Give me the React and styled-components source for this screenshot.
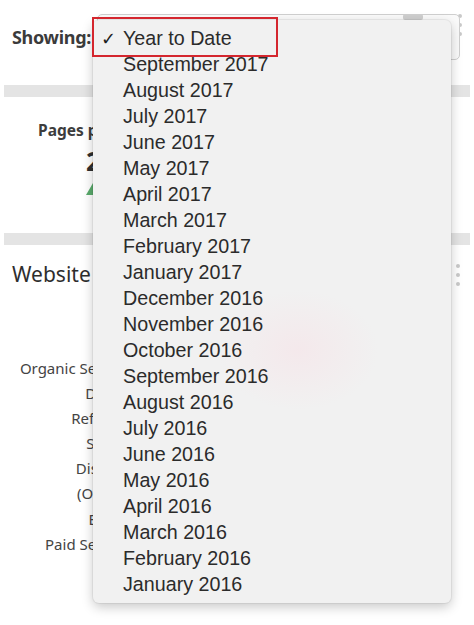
import React from "react";
import styled, { createGlobalStyle } from "styled-components";

const months = [
  "Year to Date",
  "September 2017",
  "August 2017",
  "July 2017",
  "June 2017",
  "May 2017",
  "April 2017",
  "March 2017",
  "February 2017",
  "January 2017",
  "December 2016",
  "November 2016",
  "October 2016",
  "September 2016",
  "August 2016",
  "July 2016",
  "June 2016",
  "May 2016",
  "April 2016",
  "March 2016",
  "February 2016",
  "January 2016",
];

const channels = [
  "Organic Search",
  "Direct",
  "Referral",
  "Social",
  "Display",
  "(Other)",
  "Email",
  "Paid Search",
];

export default function App() {
  return (
    <Page>
      <GlobalStyle />
      <Header>
        <Label>Showing:</Label>
        <SelectBox>
          <SelectTab />
          <Caret />
        </SelectBox>
        <Kebab>
          <Dot />
          <Dot />
          <Dot />
        </Kebab>
      </Header>
      <Divider gap="25px" />
      <Metric>
        <MetricTitle>Pages per Session</MetricTitle>
        <MetricValue>2.41</MetricValue>
        <Trend />
      </Metric>
      <Divider />
      <SectionHead>
        <SectionTitle>Website Traffic by Channel</SectionTitle>
        <Kebab>
          <Dot />
          <Dot />
          <Dot />
        </Kebab>
      </SectionHead>
      <ChannelList>
        {channels.map((c) => (
          <ChannelLabel key={c}>{c}</ChannelLabel>
        ))}
      </ChannelList>

      <Menu>
        {months.map((m, i) => (
          <MenuItem key={m}>
            <Check>{i === 0 ? "✓" : ""}</Check>
            {m}
          </MenuItem>
        ))}
      </Menu>
      <Highlight />
    </Page>
  );
}

const GlobalStyle = createGlobalStyle`
  html, body {
    margin: 0;
    padding: 0;
    background: #ffffff;
  }
  body {
    font-family: "Noto Sans", "Open Sans", sans-serif;
  }
`;

const Page = styled.div`
  position: relative;
  width: 474px;
  height: 625px;
  overflow: hidden;
  background: #fff;
  color: #3a3a3a;
`;

const Header = styled.div`
  display: flex;
  align-items: center;
  padding: 14px 12px 0 12px;
  height: 46px;
  gap: 6px;
`;

const Label = styled.div`
  font-size: 18px;
  font-weight: 700;
  color: #3b3b3b;
  letter-spacing: -0.3px;
`;

const SelectBox = styled.div`
  position: relative;
  flex: 1;
  height: 44px;
  border: 1px solid #cfcfcf;
  border-radius: 5px;
  background: #fafafa;
`;

const SelectTab = styled.div`
  position: absolute;
  top: -1px;
  right: 36px;
  width: 20px;
  height: 6px;
  background: #cfcfcf;
  border-radius: 2px;
`;

const Caret = styled.div`
  position: absolute;
  right: 8px;
  top: 28px;
  width: 0;
  height: 0;
  border-left: 3px solid transparent;
  border-right: 3px solid transparent;
  border-top: 5px solid #222;
`;

const Kebab = styled.div`
  display: flex;
  flex-direction: column;
  gap: 5px;
  align-self: flex-start;
  margin-left: -8px;
`;

const Dot = styled.span`
  width: 4px;
  height: 4px;
  border-radius: 50%;
  background: #c9c9c9;
`;

const Divider = styled.div`
  height: 12px;
  margin: ${(p) => p.gap || "0"} 4px 0 4px;
  background: #e4e4e4;
`;

const Metric = styled.div`
  height: 136px;
  padding: 22px 0 0 38px;
  box-sizing: border-box;
`;

const MetricTitle = styled.div`
  font-size: 15.5px;
  font-weight: 700;
  color: #3d3d3d;
`;

const MetricValue = styled.div`
  margin: 4px 0 0 48px;
  font-size: 26px;
  font-weight: 700;
  color: #2f2f2f;
  line-height: 32px;
`;

const Trend = styled.div`
  margin: 6px 0 0 48px;
  width: 0;
  height: 0;
  border-left: 7px solid transparent;
  border-right: 7px solid transparent;
  border-bottom: 12px solid #5aab6c;
`;

const SectionHead = styled.div`
  display: flex;
  justify-content: space-between;
  align-items: center;
  padding: 14px 14px 0 12px;
  height: 30px;

  & > div:last-child {
    align-self: center;
    margin-top: 2px;
  }
`;

const SectionTitle = styled.div`
  font-size: 21px;
  color: #2e2e2e;
`;

const ChannelList = styled.div`
  display: flex;
  flex-direction: column;
  align-items: flex-end;
  width: 127px;
  margin-top: 67px;
`;

const ChannelLabel = styled.div`
  font-size: 15px;
  line-height: 25.1px;
  color: #444;
`;

const Menu = styled.div`
  position: absolute;
  left: 93px;
  top: 20px;
  width: 358px;
  padding: 5px 0 6px 0;
  background-color: #f1f1f1;
  background-image: radial-gradient(
    ellipse 80px 60px at 205px 330px,
    rgba(248, 222, 228, 0.45),
    rgba(241, 241, 241, 0)
  );
  border-radius: 6px;
  box-shadow: 0 4px 12px rgba(0, 0, 0, 0.22), 0 0 0 1px rgba(0, 0, 0, 0.05);
  font-family: "Liberation Sans", Arial, sans-serif;
`;

const MenuItem = styled.div`
  display: flex;
  align-items: center;
  height: 26px;
  font-size: 19.7px;
  color: #2b2b2b;
`;

const Check = styled.span`
  width: 30px;
  padding-left: 8px;
  box-sizing: border-box;
  font-size: 18px;
  font-weight: 700;
  font-family: "DejaVu Sans", sans-serif;
  color: #1e1e1e;
`;

const Highlight = styled.div`
  position: absolute;
  left: 92px;
  top: 17px;
  width: 186px;
  height: 40px;
  box-sizing: border-box;
  border: 2.5px solid #d4262e;
`;
